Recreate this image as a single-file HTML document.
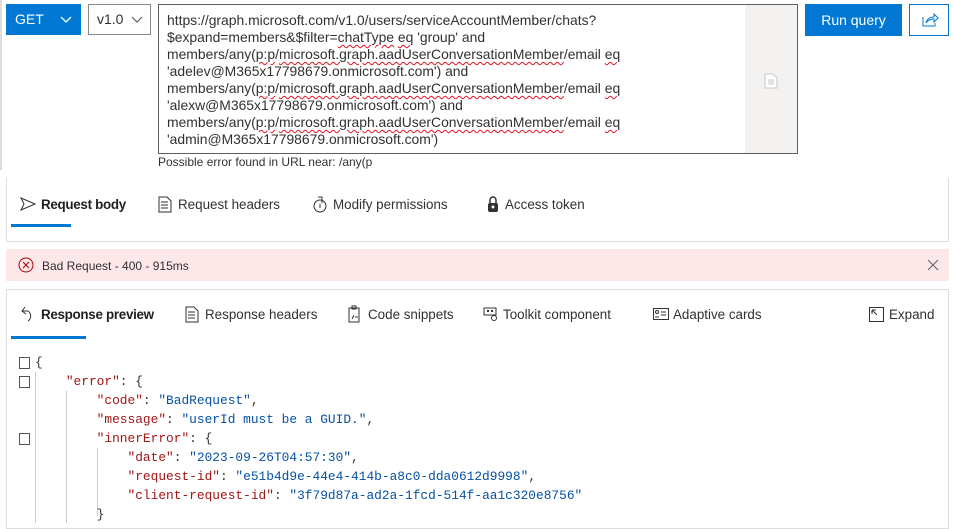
<!DOCTYPE html>
<html><head><meta charset="utf-8"><style>
*{box-sizing:border-box;margin:0;padding:0}
body{width:954px;height:523px;overflow:hidden;background:#fff;font-family:"Liberation Sans",sans-serif;font-size:13px;color:#323130;position:relative}
.a{position:absolute}
.sq{text-decoration:underline wavy #e81123;text-underline-offset:2px;text-decoration-thickness:1px}
.tab{position:absolute;font-size:13.4px;color:#323130;white-space:nowrap}
.mono{font-family:"Liberation Mono",monospace;font-size:12.85px;white-space:pre;position:absolute;left:35px}
.k{color:#a31515}.s{color:#0451a5}
.cb{position:absolute;left:19px;width:11px;height:12px;border:1px solid #555}
.vl{position:absolute;width:1px;background:#ccc}
</style></head><body>
<div class="a" style="left:0;top:0;width:2px;height:170px;background:#ddd"></div>
<div class="a" style="left:6px;top:4px;width:75px;height:31px;background:#0078d4;color:#fff;font-size:14px;padding:7px 0 0 9px">GET<svg class="a" style="left:54px;top:12px" width="12" height="8"><path d="M1 1l5 5 5-5" stroke="#fff" fill="none" stroke-width="1.3"/></svg></div>
<div class="a" style="left:88px;top:4px;width:63px;height:31px;border:1px solid #8a8886;font-size:14px;padding:6px 0 0 8px">v1.0<svg class="a" style="left:42px;top:11px" width="12" height="8"><path d="M1 1l5 5 5-5" stroke="#605e5c" fill="none" stroke-width="1.2"/></svg></div>
<div class="a" style="left:158px;top:4px;width:640px;height:150px;border:1px solid #605e5c;overflow:hidden">
<div class="a" style="right:0;top:0;width:52px;height:150px;background:#f3f2f1"></div>
<svg class="a" style="left:605px;top:68px" width="14" height="16"><path d="M1 1h8l4 4v10H1z" fill="#fff" stroke="#c8c6c4"/><path d="M4 7h6M4 9h6M4 11h6" stroke="#c8c6c4"/></svg>
<div class="a" style="left:8px;top:7px;line-height:17px;font-size:13.9px;white-space:pre;color:#323130">https://graph.microsoft.com/v1.0/users/serviceAccountMember/chats?
$expand=members&amp;$filter=<span class="sq">chatType</span> <span class="sq">eq</span> 'group' and
members/any(<span class="sq">p:p</span>/<span class="sq">microsoft.graph.aadUserConversationMember</span>/email <span class="sq">eq</span>
'adelev@M365x17798679.onmicrosoft.com') and
members/any(<span class="sq">p:p</span>/<span class="sq">microsoft.graph.aadUserConversationMember</span>/email <span class="sq">eq</span>
'alexw@M365x17798679.onmicrosoft.com') and
members/any(<span class="sq">p:p</span>/<span class="sq">microsoft.graph.aadUserConversationMember</span>/email <span class="sq">eq</span>
'admin@M365x17798679.onmicrosoft.com')</div></div>
<div class="a" style="left:158px;top:155px;font-size:12px;color:#323130">Possible error found in URL near: /any(p</div>
<div class="a" style="left:805px;top:4px;width:97px;height:32px;background:#0078d4;color:#fff;font-size:14px;text-align:center;line-height:32px">Run query</div>
<div class="a" style="left:909px;top:4px;width:40px;height:32px;border:1px solid #0078d4"><svg class="a" style="left:11px;top:7px" width="18" height="16"><path d="M2 5v9h12v-3" stroke="#0078d4" fill="none"/><path d="M5 11c1-4 4-6 8-6V2l4 4-4 4V7c-3 0-6 1-8 4z" stroke="#0078d4" fill="none"/></svg></div>

<div class="a" style="left:6px;top:178px;width:943px;height:64px;border:1px solid #ddd;border-top:none"></div>
<svg class="a" style="left:20px;top:197px" width="16" height="14"><path d="M1 1l14 6-14 6 3-6z" stroke="#323130" fill="none"/></svg>
<div class="tab" style="left:41px;top:197px;font-weight:bold;color:#201f1e;letter-spacing:-0.3px">Request body</div>
<div class="a" style="left:11px;top:224px;width:60px;height:3px;background:#0078d4"></div>
<svg class="a" style="left:158px;top:196px" width="14" height="17"><path d="M1 1h8l4 4v11H1z M3 6h7M3 9h7M3 12h7" stroke="#323130" fill="none"/></svg>
<div class="tab" style="left:178px;top:197px">Request headers</div>
<svg class="a" style="left:312px;top:196px" width="16" height="17"><circle cx="8" cy="10" r="6" stroke="#323130" fill="none"/><path d="M6 1h4v6M8 8v4" stroke="#323130" fill="none"/></svg>
<div class="tab" style="left:333px;top:197px">Modify permissions</div>
<svg class="a" style="left:487px;top:196px" width="12" height="17"><path d="M3 7V4a3 3 0 016 0v3" stroke="#323130" fill="none" stroke-width="1.5"/><rect x="1" y="7" width="10" height="9" rx="2" fill="#323130"/><circle cx="6" cy="11" r="1.5" fill="#fff"/></svg>
<div class="tab" style="left:505px;top:197px">Access token</div>

<div class="a" style="left:6px;top:249px;width:943px;height:32px;background:#fde7e9"></div>
<svg class="a" style="left:18px;top:257px" width="16" height="16"><circle cx="8" cy="8" r="7" stroke="#a80000" fill="none"/><path d="M5 5l6 6M11 5l-6 6" stroke="#a80000"/></svg>
<div class="a" style="left:42px;top:259px;font-size:12px">Bad Request - 400 - 915ms</div>
<svg class="a" style="left:927px;top:259px" width="12" height="12"><path d="M1 1l10 10M11 1L1 11" stroke="#605e5c"/></svg>

<div class="a" style="left:6px;top:289px;width:943px;height:240px;border:1px solid #ddd"></div>
<svg class="a" style="left:21px;top:306px" width="14" height="16"><path d="M4 1L1 5l4 3M1 5h6a6 6 0 010 10" stroke="#323130" fill="none"/></svg>
<div class="tab" style="left:41px;top:307px;font-weight:bold;color:#201f1e;letter-spacing:-0.3px">Response preview</div>
<div class="a" style="left:11px;top:336px;width:75px;height:3px;background:#0078d4"></div>
<svg class="a" style="left:185px;top:306px" width="14" height="17"><path d="M1 1h8l4 4v11H1z M3 6h7M3 9h7M3 12h7" stroke="#323130" fill="none"/></svg>
<div class="tab" style="left:205px;top:307px">Response headers</div>
<svg class="a" style="left:346px;top:305px" width="16" height="18"><path d="M3 3h10v14H3z M6 1h4v3H6z" stroke="#323130" fill="none"/><path d="M6 14l2-4M9 12h3" stroke="#323130" fill="none"/></svg>
<div class="tab" style="left:368px;top:307px">Code snippets</div>
<svg class="a" style="left:483px;top:307px" width="16" height="14"><rect x="1" y="1" width="12" height="7" stroke="#323130" fill="none"/><path d="M4 3h2v2H4zM8 3h2v2H8z" fill="#323130"/><circle cx="11" cy="11" r="2.5" stroke="#323130" fill="none"/></svg>
<div class="tab" style="left:503px;top:307px">Toolkit component</div>
<svg class="a" style="left:653px;top:308px" width="16" height="12"><rect x="0.5" y="0.5" width="15" height="11" stroke="#323130" fill="none"/><circle cx="4" cy="4" r="1.5" stroke="#323130" fill="none"/><path d="M2 9h4M8 4h5M8 7h5" stroke="#323130"/></svg>
<div class="tab" style="left:673px;top:307px">Adaptive cards</div>
<svg class="a" style="left:869px;top:307px" width="15" height="15"><rect x="0.5" y="0.5" width="14" height="14" stroke="#323130" fill="none"/><path d="M3 3l5 5M3 3v4M3 3h4" stroke="#323130" fill="none"/></svg>
<div class="tab" style="left:889px;top:307px">Expand</div>

<div class="cb" style="top:357px"></div><div class="cb" style="top:376px"></div><div class="cb" style="top:433px"></div>
<div class="vl" style="left:35px;top:372px;height:151px"></div>
<div class="vl" style="left:66px;top:391px;height:132px"></div>
<div class="vl" style="left:97px;top:448px;height:68px"></div>
<div class="mono" style="top:355px">{</div>
<div class="mono" style="top:374px">    <span class="k">"error"</span>: {</div>
<div class="mono" style="top:393px">        <span class="k">"code"</span>: <span class="s">"BadRequest"</span>,</div>
<div class="mono" style="top:412px">        <span class="k">"message"</span>: <span class="s">"userId must be a GUID."</span>,</div>
<div class="mono" style="top:431px">        <span class="k">"innerError"</span>: {</div>
<div class="mono" style="top:450px">            <span class="k">"date"</span>: <span class="s">"2023-09-26T04:57:30"</span>,</div>
<div class="mono" style="top:469px">            <span class="k">"request-id"</span>: <span class="s">"e51b4d9e-44e4-414b-a8c0-dda0612d9998"</span>,</div>
<div class="mono" style="top:488px">            <span class="k">"client-request-id"</span>: <span class="s">"3f79d87a-ad2a-1fcd-514f-aa1c320e8756"</span></div>
<div class="mono" style="top:507px">        }</div>
</body></html>
